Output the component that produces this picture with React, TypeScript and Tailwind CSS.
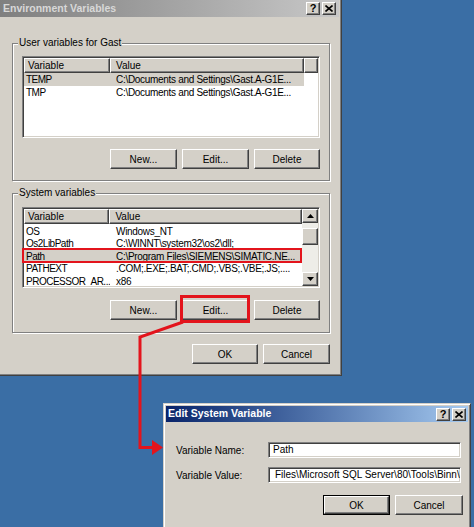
import type { ReactNode } from "react";

const raised =
  "border border-t-white border-l-white border-r-[#404040] border-b-[#404040] shadow-[inset_-1px_-1px_0_#808080]";
const sunken =
  "border border-t-[#808080] border-l-[#808080] border-r-white border-b-white shadow-[inset_1px_1px_0_#404040,inset_-1px_-1px_0_#d4d0c8]";

type Row = { name: string; value: string; selected?: boolean };

const userRows: Row[] = [
  { name: "TEMP", value: "C:\\Documents and Settings\\Gast.A-G1E...", selected: true },
  { name: "TMP", value: "C:\\Documents and Settings\\Gast.A-G1E..." },
];

const systemRows: Row[] = [
  { name: "OS", value: "Windows_NT" },
  { name: "Os2LibPath", value: "C:\\WINNT\\system32\\os2\\dll;" },
  { name: "Path", value: "C:\\Program Files\\SIEMENS\\SIMATIC.NE...", selected: true },
  { name: "PATHEXT", value: ".COM;.EXE;.BAT;.CMD;.VBS;.VBE;.JS;...." },
  { name: "PROCESSOR_AR...", value: "x86" },
];

function Button({ label, width, isDefault }: { label: string; width: string; isDefault?: boolean }) {
  return (
    <div className={`h-[20px] ${width} ${isDefault ? "border border-black" : ""}`}>
      <div className={`flex h-full items-center justify-center bg-[#d4d0c8] ${raised}`}>{label}</div>
    </div>
  );
}

function CaptionButton({ children }: { children: ReactNode }) {
  return (
    <div className={`flex h-[13px] w-[14px] items-center justify-center bg-[#d4d0c8] ${raised}`}>
      {children}
    </div>
  );
}

function CaptionButtons() {
  return (
    <div className="flex items-center gap-[2px]">
      <CaptionButton>
        <span className="text-[11px] font-bold leading-none">?</span>
      </CaptionButton>
      <CaptionButton>
        <svg width="8" height="7" viewBox="0 0 8 7">
          <path d="M0.5 0.5 L7.5 6.5 M7.5 0.5 L0.5 6.5" stroke="black" strokeWidth="1.6" />
        </svg>
      </CaptionButton>
    </div>
  );
}

function Arrow({ down }: { down?: boolean }) {
  return (
    <svg width="7" height="4" viewBox="0 0 7 4">
      <path d={down ? "M0 0 H7 L3.5 4 Z" : "M0 4 H7 L3.5 0 Z"} fill="black" />
    </svg>
  );
}

function ScrollBar() {
  return (
    <div className="flex w-[16px] flex-col bg-[#eeede8]">
      <div className={`flex h-[14px] items-center justify-center bg-[#d4d0c8] ${raised}`}>
        <Arrow />
      </div>
      <div className={`mt-[5px] h-[17px] bg-[#d4d0c8] ${raised}`} />
      <div className="flex-1" />
      <div className={`flex h-[14px] items-center justify-center bg-[#d4d0c8] ${raised}`}>
        <Arrow down />
      </div>
    </div>
  );
}

function ListView({
  rows,
  height,
  rowHeight,
  scroll,
}: {
  rows: Row[];
  height: string;
  rowHeight: string;
  scroll?: boolean;
}) {
  return (
    <div className={`ml-[9px] w-[298px] ${height} bg-white p-[1px] ${sunken}`}>
      <div className="flex h-full overflow-hidden">
        <div className="flex min-w-0 flex-1 flex-col">
          <div className="flex h-[15px] shrink-0">
            <div className={`w-[86px] bg-[#d4d0c8] pl-[3px] leading-[13px] ${raised}`}>Variable</div>
            <div className={`w-[194px] bg-[#d4d0c8] pl-[5px] leading-[13px] ${raised}`}>Value</div>
            {!scroll && <div className={`flex-1 bg-[#d4d0c8] ${raised}`} />}
          </div>
          <div className={scroll ? "pt-[1px]" : ""}>
            {rows.map((row) => (
              <div key={row.name} className={`flex ${rowHeight} items-center`}>
                <div
                  className={`flex h-full w-[280px] items-center whitespace-nowrap tracking-[-0.3px] ${
                    row.selected ? "bg-[#d4d0c8]" : ""
                  }`}
                >
                  <span className="w-[86px] shrink-0 overflow-hidden pl-[2px] tracking-[-0.5px]">{row.name}</span>
                  <span className="w-[194px] shrink-0 overflow-hidden pl-[6px]">{row.value}</span>
                </div>
              </div>
            ))}
          </div>
        </div>
        {scroll && <ScrollBar />}
      </div>
    </div>
  );
}

function GroupBox({
  label,
  height,
  children,
}: {
  label: string;
  height: string;
  children: ReactNode;
}) {
  return (
    <div
      className={`relative ml-[12px] w-[318px] ${height} border border-[#808080] shadow-[1px_1px_0_white,inset_1px_1px_0_white]`}
    >
      <span className="absolute -top-[8px] left-[5px] bg-[#d4d0c8] px-[1px] leading-[14px]">{label}</span>
      {children}
    </div>
  );
}

function ActionButtons() {
  return (
    <div className="flex justify-end gap-[5px] pr-[9px]">
      <Button label="New..." width="w-[67px]" />
      <Button label="Edit..." width="w-[67px]" />
      <Button label="Delete" width="w-[66px]" />
    </div>
  );
}

function EnvDialog() {
  return (
    <div className="absolute left-0 top-0 flex h-[376px] w-[342px] flex-col border-r border-b border-[#404040] bg-[#d4d0c8] shadow-[inset_-1px_-1px_0_#808080]">
      <div className="mr-[2px] flex h-[17px] items-center justify-between bg-linear-to-r from-[#7f7f7f] to-[#c8c8c8] pl-[3px] pr-[3px]">
        <span className="text-[10.5px] font-bold text-[#d8d8d8]">Environment Variables</span>
        <CaptionButtons />
      </div>

      <div className="mt-[26px]">
        <GroupBox label="User variables for Gast" height="h-[138px]">
          <div className="mt-[12px]">
            <ListView rows={userRows} height="h-[82px]" rowHeight="h-[13px]" />
          </div>
          <div className="mt-[11px]">
            <ActionButtons />
          </div>
        </GroupBox>
      </div>

      <div className="mt-[12px]">
        <GroupBox label="System variables" height="h-[140px]">
          <div className="mt-[13px]">
            <ListView rows={systemRows} height="h-[81px]" rowHeight="h-[12.5px]" scroll />
          </div>
          <div className="mt-[12px]">
            <ActionButtons />
          </div>
        </GroupBox>
      </div>

      <div className="mt-[11px] flex gap-[5px] pl-[192px]">
        <Button label="OK" width="w-[66px]" />
        <Button label="Cancel" width="w-[67px]" />
      </div>
    </div>
  );
}

function EditDialog() {
  return (
    <div className="absolute left-[163px] top-[403px] h-[140px] w-[308px] border border-t-[#d4d0c8] border-l-[#d4d0c8] border-r-[#404040] border-b-[#404040] bg-[#d4d0c8] p-[2px] shadow-[inset_1px_1px_0_white,inset_-1px_-1px_0_#808080]">
      <div className="flex h-[16px] items-center justify-between bg-linear-to-r from-[#0a246a] to-[#a6caf0] pl-[2px] pr-[2px]">
        <span className="text-[10.5px] font-bold text-white">Edit System Variable</span>
        <CaptionButtons />
      </div>
      <div className="pl-[10px] pr-[5px]">
        <div className="mt-[20px] flex items-center">
          <span className="w-[92px]">Variable Name:</span>
          <div className={`h-[16px] w-[193px] bg-white pl-[4px] leading-[14px] ${sunken}`}>Path</div>
        </div>
        <div className="mt-[9px] flex items-center">
          <span className="w-[92px]">Variable Value:</span>
          <div className={`h-[16px] w-[193px] overflow-hidden whitespace-nowrap bg-white pl-[6px] leading-[14px] ${sunken}`}>
            Files\Microsoft SQL Server\80\Tools\Binn\
          </div>
        </div>
        <div className="mt-[12px] flex justify-end gap-[5px]">
          <Button label="OK" width="w-[67px]" isDefault />
          <Button label="Cancel" width="w-[68px]" />
        </div>
      </div>
    </div>
  );
}

function Annotations() {
  return (
    <svg className="pointer-events-none absolute left-0 top-0" width="474" height="527" viewBox="0 0 474 527">
      <rect x="23" y="249" width="278" height="13" fill="none" stroke="#e3141c" strokeWidth="2" />
      <rect x="181.5" y="296.5" width="67" height="25" fill="none" stroke="#e3141c" strokeWidth="3" />
      <polyline
        points="183,322 140,337 140,447.5 153,447.5"
        fill="none"
        stroke="#e3141c"
        strokeWidth="3"
      />
      <polygon points="152,440 163,447.5 152,455" fill="#e3141c" />
    </svg>
  );
}

export default function App() {
  return (
    <div className="relative h-[527px] w-[474px] overflow-hidden bg-[#3a6ea5] font-['Liberation_Sans',sans-serif] text-[10px] text-black">
      <EnvDialog />
      <EditDialog />
      <Annotations />
    </div>
  );
}
